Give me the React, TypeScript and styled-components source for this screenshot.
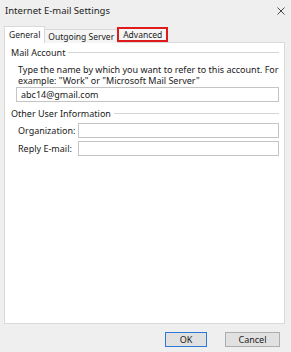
import React from 'react'
import styled, { createGlobalStyle, css } from 'styled-components'

const Global = createGlobalStyle`
    html, body {
        margin: 0;
        padding: 0;
        background: #efefef;
    }
    * {
        box-sizing: border-box;
    }
`

const Window = styled.div`
    width: 291px;
    height: 352px;
    background: #efefef;
    display: flex;
    flex-direction: column;
    font-family: "Noto Sans", "Open Sans", sans-serif;
    font-size: 9px;
    color: #1a1a1a;
    overflow: hidden;
`

const TitleBar = styled.div`
    height: 21px;
    padding: 0 6px 0 5px;
    display: flex;
    align-items: center;
    justify-content: space-between;
    font-size: 9.5px;
    color: #222;
`

const Body = styled.div`
    padding: 6px 6px 0 4px;
    display: flex;
    flex-direction: column;
`

const TabRow = styled.div`
    display: flex;
    align-items: flex-end;
    height: 16px;
    position: relative;
    z-index: 1;
    margin-bottom: -1px;
`

const Tab = styled.div<{ $active?: boolean; $marked?: boolean }>`
    height: 14px;
    padding: 0 3px;
    display: flex;
    align-items: center;
    font-size: 8.5px;
    border: 1px solid #d9d9d9;
    border-bottom: none;
    background: #f5f5f5;
    margin-left: -1px;

    ${(p) => p.$active && css`
        height: 17px;
        background: #fff;
        margin-left: 0;
        padding: 0 4px 1px 4px;
    `}

    ${(p) => p.$marked && css`
        border: 2px solid #e01b1b;
        height: 15px;
        margin-bottom: 1px;
        padding: 0 4px;
    `}
`

const Panel = styled.div`
    height: 282px;
    background: #fff;
    border: 1px solid #d9d9d9;
    padding: 3px 5px 0 6px;
    display: flex;
    flex-direction: column;
`

const GroupHeader = styled.div`
    display: flex;
    align-items: center;
    gap: 3px;
    height: 12px;

    &::after {
        content: '';
        flex: 1;
        height: 1px;
        background: #d5d5d5;
    }
`

const Description = styled.p`
    margin: 6px 0 0 7px;
    line-height: 11px;
`

const TextInput = styled.div<{ $wide?: boolean }>`
    height: 15px;
    border: 1px solid #c4c4c4;
    background: #fff;
    display: flex;
    align-items: center;
    padding-left: 4px;
    ${(p) => p.$wide ? css`
        margin: 1px 0 5px 5px;
    ` : css`
        flex: 1;
    `}
`

const FieldRow = styled.div`
    display: flex;
    align-items: center;
    margin-left: 7px;
    margin-top: 3px;

    &:first-of-type {
        margin-top: 4px;
    }

    & label {
        width: 60px;
    }
`

const Fields = styled.div`
    display: flex;
    flex-direction: column;
`

const Footer = styled.div`
    display: flex;
    justify-content: flex-end;
    gap: 18px;
    padding: 8px 5px 0 0;
`

const Button = styled.button<{ $primary?: boolean }>`
    height: 15px;
    width: 55px;
    padding: 0;
    font-family: inherit;
    font-size: 9px;
    color: #1a1a1a;
    background: #e1e1e1;
    border: 1px solid #adadad;
    ${(p) => p.$primary && css`
        width: 42px;
        border: 1px solid #2b7bd6;
    `}
`

export default function App() {
    return (
        <>
            <Global />
            <Window>
                <TitleBar>
                    <span>Internet E-mail Settings</span>
                    <svg width="8" height="8" viewBox="0 0 8 8">
                        <path d="M0.5 0.5 L7.5 7.5 M7.5 0.5 L0.5 7.5" stroke="#333" strokeWidth="0.9" />
                    </svg>
                </TitleBar>
                <Body>
                    <TabRow>
                        <Tab $active>General</Tab>
                        <Tab>Outgoing Server</Tab>
                        <Tab $marked>Advanced</Tab>
                    </TabRow>
                    <Panel>
                        <GroupHeader>Mail Account</GroupHeader>
                        <Description>
                            Type the name by which you want to refer to this account. For
                            example: "Work" or "Microsoft Mail Server"
                        </Description>
                        <TextInput $wide>abc14@gmail.com</TextInput>
                        <GroupHeader>Other User Information</GroupHeader>
                        <Fields>
                            <FieldRow>
                                <label>Organization:</label>
                                <TextInput />
                            </FieldRow>
                            <FieldRow>
                                <label>Reply E-mail:</label>
                                <TextInput />
                            </FieldRow>
                        </Fields>
                    </Panel>
                    <Footer>
                        <Button $primary>OK</Button>
                        <Button>Cancel</Button>
                    </Footer>
                </Body>
            </Window>
        </>
    )
}
